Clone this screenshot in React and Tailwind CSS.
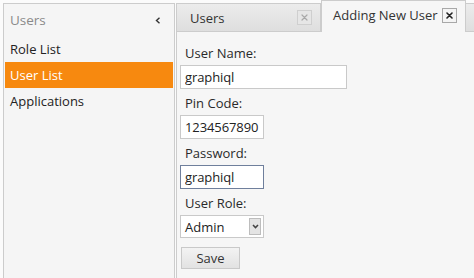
import React from 'react'

const font = { fontFamily: '"Open Sans", "Noto Sans", sans-serif' }

function CloseBox({ active }) {
  return (
    <span
      className={
        'flex h-[15px] w-[15px] shrink-0 items-center justify-center border ' +
        (active ? 'border-[#a8a8a8] bg-[#f4f4f4]' : 'border-[#cfcfcf] bg-[#e6e6e6]')
      }
    >
      <svg width="7" height="7" viewBox="0 0 7 7">
        <path
          d="M1 1L6 6M6 1L1 6"
          stroke={active ? '#222' : '#a9a9a9'}
          strokeWidth={active ? 1.6 : 1.2}
          strokeLinecap="round"
        />
      </svg>
    </span>
  )
}

function Field({ label, value, wide, focused }) {
  return (
    <div className="mb-[4px] flex flex-col">
      <label className="h-[20px] pl-[5px] leading-[20px] text-[#2a2a2a]">{label}</label>
      <input
        readOnly
        value={value}
        className={
          'mt-[2px] h-[24px] bg-white px-[4px] text-[13px] tracking-[-0.1px] text-[#222] outline-none border ' +
          (wide ? 'w-[167px] ' : 'w-[84px] ') +
          (focused ? 'border-[#6f7f9c]' : 'border-[#c9c9c9]')
        }
        style={font}
      />
    </div>
  )
}

export default function App() {
  return (
    <div className="flex h-[278px] w-[474px] overflow-hidden bg-[#fbfbfb] text-[13px]" style={font}>
      {/* ── side menu ─────────────────────────────── */}
      <aside className="ml-[3px] mt-[3px] flex w-[172px] shrink-0 flex-col border border-b-0 border-[#cccccc] bg-[#f5f5f5] px-px">
        <div className="flex h-[32px] items-center justify-between pl-[5px] pr-[12px]">
          <span className="text-[13.5px] leading-[20px] text-[#8a8a8a]">Users</span>
          <svg width="6" height="7" viewBox="0 0 6 7">
            <path d="M4.5 0.8L1.5 3.5L4.5 6.2" fill="none" stroke="#333" strokeWidth="1.4" />
          </svg>
        </div>
        <div className="flex h-[26px] items-center pl-[5px] leading-[20px] text-[#222]">Role List</div>
        <div className="flex h-[26px] items-center bg-[#f7890f] pl-[5px] leading-[20px] text-white">User List</div>
        <div className="flex h-[26px] items-center pl-[5px] leading-[20px] text-[#222]">Applications</div>
      </aside>

      {/* ── tabs + form ───────────────────────────── */}
      <main className="ml-px flex min-w-0 flex-1 flex-col">
        <div className="flex h-[32px] shrink-0 items-end bg-[#fbfbfb]">
          <div className="flex h-[29px] w-[145px] items-center justify-between border border-[#cccccc] bg-gradient-to-b from-[#ececec] to-[#dedede] pl-[13px] pr-[8px] text-[#333]">
            <span className="leading-[20px]">Users</span>
            <CloseBox />
          </div>
          <div className="flex h-[32px] w-[145px] items-start justify-between border border-b-0 border-[#cccccc] bg-[#f6f6f6] pl-[11px] pr-[8px] pt-[7px] text-[#333]">
            <span className="-mt-[3px] whitespace-nowrap leading-[20px]">Adding New User</span>
            <CloseBox active />
          </div>
          <div className="h-[29px] flex-1 border-y border-[#cccccc] bg-gradient-to-b from-[#ececec] to-[#dedede]" />
        </div>

        <form className="flex-1 border-l border-[#cccccc] bg-[#f6f6f6] pl-[3px] pt-[11px]">
          <Field label="User Name:" value="graphiql" wide />
          <Field label="Pin Code:" value="1234567890" />
          <Field label="Password:" value="graphiql" focused />
          <div className="flex flex-col">
            <label className="h-[20px] pl-[5px] leading-[20px] text-[#2a2a2a]">User Role:</label>
            <div className="mt-[2px] flex h-[23px] w-[84px] items-center justify-between border border-[#c9c9c9] bg-white pl-[4px] pr-[2px] text-[#222]">
              <span className="leading-[20px]">Admin</span>
              <span className="flex h-[17px] w-[12px] items-center justify-center border border-[#bdbdbd] bg-[#e4e4e4]">
                <svg width="7" height="5" viewBox="0 0 7 5">
                  <path d="M1 1L3.5 3.6L6 1" fill="none" stroke="#444" strokeWidth="1.5" />
                </svg>
              </span>
            </div>
          </div>
          <button
            type="button"
            className="ml-px mt-[9px] h-[22px] w-[59px] border border-[#c9c9c9] bg-gradient-to-b from-[#f3f3f3] to-[#e2e2e2] text-[13px] leading-[20px] text-[#333]"
            style={font}
          >
            Save
          </button>
        </form>
      </main>
    </div>
  )
}
